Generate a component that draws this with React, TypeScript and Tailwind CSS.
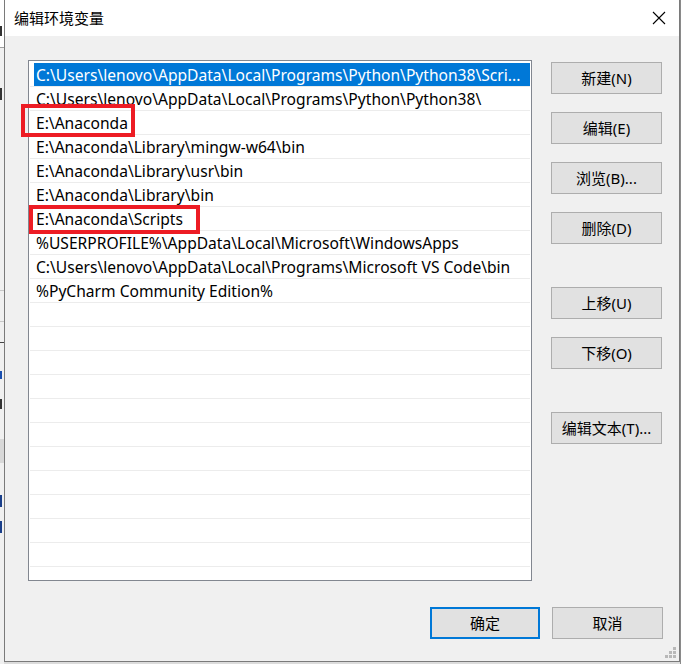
import React from "react";

const paths = [
  "C:\\Users\\lenovo\\AppData\\Local\\Programs\\Python\\Python38\\Scri...",
  "C:\\Users\\lenovo\\AppData\\Local\\Programs\\Python\\Python38\\",
  "E:\\Anaconda",
  "E:\\Anaconda\\Library\\mingw-w64\\bin",
  "E:\\Anaconda\\Library\\usr\\bin",
  "E:\\Anaconda\\Library\\bin",
  "E:\\Anaconda\\Scripts",
  "%USERPROFILE%\\AppData\\Local\\Microsoft\\WindowsApps",
  "C:\\Users\\lenovo\\AppData\\Local\\Programs\\Microsoft VS Code\\bin",
  "%PyCharm Community Edition%",
];

const font = { fontFamily: '"Noto Sans", "Noto Sans CJK SC", sans-serif' };

function Btn({ label, primary }: { label: string; primary?: boolean }) {
  return (
    <button
      className={
        primary
          ? "w-[110px] h-[32px] bg-[#e1e1e1] border-2 border-[#0078d7] text-[15px] text-black"
          : "w-[111px] h-[32px] bg-[#e1e1e1] border border-[#adadad] text-[15px] text-black"
      }
    >
      {label}
    </button>
  );
}

export default function App() {
  const rows = [...paths, ...Array(11).fill("")];
  return (
    <div className="w-[681px] h-[664px] flex bg-[#dcdcdc] overflow-hidden" style={font}>
      {/* sliver of window behind */}
      <div className="w-[4px] shrink-0 flex flex-col bg-[#f0f0f0]">
        <div className="h-[47px] bg-white flex flex-col">
          <div className="h-[26px]" />
          <div className="h-[10px] w-[2px] bg-[#333]" />
        </div>
        <div className="h-px bg-[#a0a0a0]" />
        <div className="h-[40px]" />
        <div className="h-[12px] w-[2px] bg-[#333]" />
        <div className="h-[190px]" />
        <div className="h-px bg-[#c8c8c8]" />
        <div className="h-[30px]" />
        <div className="h-px bg-[#c8c8c8]" />
        <div className="h-[20px]" />
        <div className="h-px bg-[#444]" />
        <div className="h-[28px]" />
        <div className="h-[8px] w-[2px] bg-[#1a4fb0]" />
        <div className="h-[20px]" />
        <div className="h-[10px] w-[2px] bg-[#333]" />
        <div className="h-[30px]" />
        <div className="h-[24px] bg-[#d8d8d8]" />
        <div className="h-[32px]" />
        <div className="h-[12px] w-[2px] bg-[#1a3f8a]" />
        <div className="h-[14px]" />
        <div className="h-[12px] w-[2px] bg-[#1a3f8a]" />
      </div>

      {/* dialog */}
      <div className="w-[676px] h-[662px] shrink-0 flex flex-col bg-[#f0f0f0] border-l border-r border-b border-[#7a7a7a] relative">
        <div className="h-[36px] bg-white flex items-center justify-between pl-[9px] pr-[13px]">
          <span className="text-[15px] text-black">编辑环境变量</span>
          <svg width="14" height="14" viewBox="0 0 14 14">
            <path d="M1 1 L13 13 M13 1 L1 13" stroke="#000" strokeWidth="1.1" />
          </svg>
        </div>

        <div className="flex flex-col pl-[23px] pt-[24px] pr-[16px]">
          <div className="flex gap-[19px]">
            <div className="w-[504px] h-[521px] bg-white border border-[#828790] pt-[2px] overflow-hidden">
              {rows.map((p, i) => (
                <div key={i} className="h-[24px] mx-px border-b border-[#ececec] flex">
                  <div
                    className={
                      i === 0
                        ? "ml-[4px] flex-1 bg-[#0078d7] text-white text-[15.6px] leading-[23px] pl-[2px] pt-px whitespace-nowrap overflow-hidden"
                        : "ml-[4px] flex-1 text-black text-[15.6px] leading-[23px] pl-[2px] pt-px whitespace-nowrap overflow-hidden"
                    }
                  >
                    {p}
                  </div>
                </div>
              ))}
            </div>

            <div className="flex flex-col pt-[2px]">
              <div className="flex flex-col gap-[18px]">
                <Btn label="新建(N)" />
                <Btn label="编辑(E)" />
                <Btn label="浏览(B)..." />
                <Btn label="删除(D)" />
              </div>
              <div className="flex flex-col gap-[18px] mt-[43px]">
                <Btn label="上移(U)" />
                <Btn label="下移(O)" />
              </div>
              <div className="mt-[43px]">
                <Btn label="编辑文本(T)..." />
              </div>
            </div>
          </div>

          <div className="flex justify-end gap-[12px] mt-[26px]">
            <Btn label="确定" primary />
            <Btn label="取消" />
          </div>
        </div>

        {/* annotation boxes */}
        <div className="absolute left-[16px] top-[104px] w-[114px] h-[33px] border-4 border-[#ed1c24]" />
        <div className="absolute left-[24px] top-[205px] w-[171px] h-[29px] border-4 border-[#ed1c24]" />

        {/* resize grip */}
        <svg className="absolute right-[2px] bottom-[2px]" width="12" height="12" viewBox="0 0 12 12">
          <rect x="8" y="0" width="3" height="3" fill="#b8b8b8" />
          <rect x="4" y="4" width="3" height="3" fill="#b8b8b8" />
          <rect x="8" y="4" width="3" height="3" fill="#b8b8b8" />
          <rect x="0" y="8" width="3" height="3" fill="#b8b8b8" />
          <rect x="4" y="8" width="3" height="3" fill="#b8b8b8" />
          <rect x="8" y="8" width="3" height="3" fill="#b8b8b8" />
        </svg>
      </div>

      <div className="flex-1 bg-[#8a8a8a]" />
    </div>
  );
}
